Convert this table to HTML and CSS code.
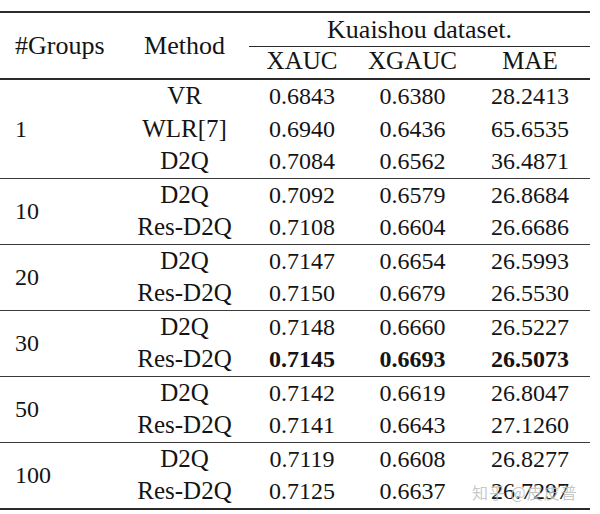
FILE: index.html
```html
<!DOCTYPE html>
<html lang="en">
<head>
<meta charset="utf-8">
<title>Kuaishou dataset</title>
<link rel="stylesheet" href="styles.css">
</head>
<body>
<div class="page">
<table class="results">
  <colgroup>
    <col class="c-groups">
    <col class="c-method">
    <col class="c-xauc">
    <col class="c-xgauc">
    <col class="c-mae">
  </colgroup>
  <thead>
    <tr class="hrow1">
      <th rowspan="2" class="groups label">#Groups</th>
      <th rowspan="2" class="label">Method</th>
      <th colspan="3" class="dataset label">Kuaishou dataset.</th>
    </tr>
    <tr class="hrow2">
      <th>XAUC</th>
      <th>XGAUC</th>
      <th>MAE</th>
    </tr>
  </thead>
  <tbody>
    <tr><td rowspan="3" class="groups">1</td><td class="m">VR</td><td>0.6843</td><td>0.6380</td><td>28.2413</td></tr>
    <tr><td class="m">WLR[7]</td><td>0.6940</td><td>0.6436</td><td>65.6535</td></tr>
    <tr><td class="m">D2Q</td><td>0.7084</td><td>0.6562</td><td>36.4871</td></tr>
  </tbody>
  <tbody>
    <tr><td rowspan="2" class="groups">10</td><td class="m">D2Q</td><td>0.7092</td><td>0.6579</td><td>26.8684</td></tr>
    <tr><td class="m">Res-D2Q</td><td>0.7108</td><td>0.6604</td><td>26.6686</td></tr>
  </tbody>
  <tbody>
    <tr><td rowspan="2" class="groups">20</td><td class="m">D2Q</td><td>0.7147</td><td>0.6654</td><td>26.5993</td></tr>
    <tr><td class="m">Res-D2Q</td><td>0.7150</td><td>0.6679</td><td>26.5530</td></tr>
  </tbody>
  <tbody>
    <tr><td rowspan="2" class="groups">30</td><td class="m">D2Q</td><td>0.7148</td><td>0.6660</td><td>26.5227</td></tr>
    <tr><td class="m">Res-D2Q</td><td class="best">0.7145</td><td class="best">0.6693</td><td class="best">26.5073</td></tr>
  </tbody>
  <tbody>
    <tr><td rowspan="2" class="groups">50</td><td class="m">D2Q</td><td>0.7142</td><td>0.6619</td><td>26.8047</td></tr>
    <tr><td class="m">Res-D2Q</td><td>0.7141</td><td>0.6643</td><td>27.1260</td></tr>
  </tbody>
  <tbody class="last">
    <tr><td rowspan="2" class="groups">100</td><td class="m">D2Q</td><td>0.7119</td><td>0.6608</td><td>26.8277</td></tr>
    <tr><td class="m">Res-D2Q</td><td>0.7125</td><td>0.6637</td><td>26.7297</td></tr>
  </tbody>
</table>
<div class="watermark">知乎 @皮皮普</div>
</div>
</body>
</html>
```

FILE: styles.css
```css
html, body {
  margin: 0;
  padding: 0;
  background: #ffffff;
}

.page {
  position: relative;
  width: 600px;
  height: 514px;
  padding-top: 11px;
  box-sizing: border-box;
}

.results {
  width: 590px;
  table-layout: fixed;
  border-collapse: collapse;
  font-family: "Liberation Serif", "Times New Roman", serif;
  font-size: 24px;
  color: #141414;
  border-top: 2px solid #2b2b2b;
  border-bottom: 2px solid #2b2b2b;
}

.c-groups { width: 120px; }
.c-method { width: 129px; }
.c-xauc { width: 106px; }
.c-xgauc { width: 115px; }
.c-mae { width: 120px; }

.results th,
.results td {
  padding: 0;
  font-weight: normal;
  text-align: center;
  vertical-align: middle;
  white-space: nowrap;
  line-height: 24px;
}

.results .label {
  font-size: 26px;
}

.results .m {
  font-size: 25px;
}

.results .groups {
  text-align: left;
  padding-left: 15px;
}

.hrow1 th {
  height: 33px;
}

.hrow2 th {
  height: 27px;
  padding-bottom: 4px;
  font-size: 25px;
}

.results .dataset {
  border-bottom: 1.5px solid #2b2b2b;
}

.results thead {
  border-bottom: 2px solid #2b2b2b;
}

.results tbody {
  border-bottom: 1.5px solid #3a3a3a;
}

.results tbody.last {
  border-bottom: 2px solid #2b2b2b;
}

.results td {
  height: 32.5px;
}

.results .best {
  font-weight: bold;
}

.watermark {
  position: absolute;
  left: 472px;
  top: 480px;
  font-family: "Noto Sans CJK SC", sans-serif;
  font-size: 16px;
  color: rgba(190, 190, 190, 0.85);
  letter-spacing: 1px;
}
```
